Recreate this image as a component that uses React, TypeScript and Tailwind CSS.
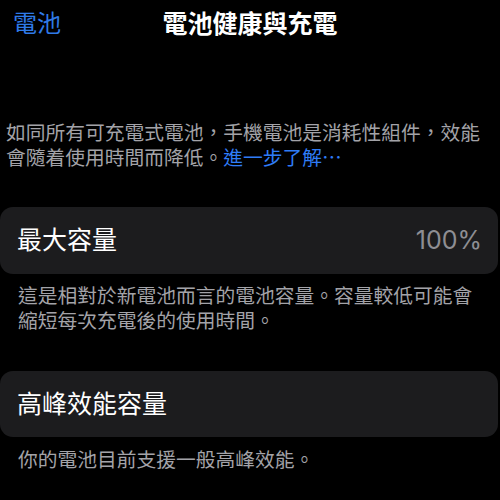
export default function App() {
  return (
    <div
      className="w-[500px] h-[500px] overflow-hidden bg-black text-white"
      style={{ fontFamily: '"Inter", "Noto Sans CJK TC", sans-serif' }}
    >
      <header className="grid grid-cols-[1fr_auto_1fr] items-center h-[48px]">
        <span className="pl-[13px] text-[24px] leading-none text-[#2f7ae8]">電池</span>
        <h1 className="text-[25px] leading-none font-bold">電池健康與充電</h1>
        <span />
      </header>

      <p className="mt-[73px] px-[6px] text-[19.75px] leading-[25px] text-[#a3a3a8]">
        如同所有可充電式電池，手機電池是消耗性組件，效能會隨着使用時間而降低。
        <span className="text-[#2f7cf6]">進一步了解⋯</span>
      </p>

      <section className="mt-[36px]">
        <div className="flex items-center justify-between h-[67px] w-[498px] rounded-[13px] bg-[#1c1c1e] pl-[17px] pr-[16px]">
          <span className="text-[25px] leading-none">最大容量</span>
          <span className="text-[25px] leading-none text-[#8e8e93]">100%</span>
        </div>
        <p className="mt-[10px] px-[18px] text-[19.75px] leading-[24.5px] text-[#a3a3a8]">
          這是相對於新電池而言的電池容量。容量較低可能會縮短每次充電後的使用時間。
        </p>
      </section>

      <section className="mt-[38px]">
        <div className="flex items-center h-[66px] w-[498px] rounded-[13px] bg-[#1c1c1e] px-[17px]">
          <span className="text-[25px] leading-none">高峰效能容量</span>
        </div>
        <p className="mt-[11px] px-[18px] text-[19.75px] leading-[25px] text-[#a3a3a8]">
          你的電池目前支援一般高峰效能。
        </p>
      </section>
    </div>
  );
}
